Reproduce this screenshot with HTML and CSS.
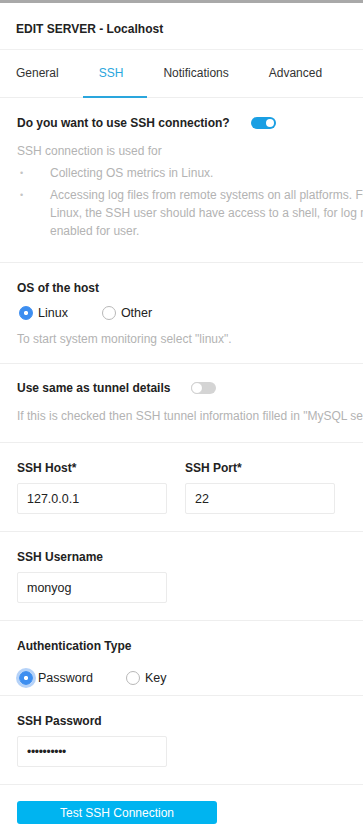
FILE: index.html
```html
<!DOCTYPE html>
<html>
  <head>
    <meta charset="utf-8" />
    <title>Edit Server - Localhost</title>
    <link rel="stylesheet" href="styles.css">
  </head>
  <body>
    <div class="panel">
      <div class="header">EDIT SERVER - Localhost</div>

      <div class="tabs">
        <div class="tab">General</div>
        <div class="tab active">SSH</div>
        <div class="tab">Notifications</div>
        <div class="tab">Advanced</div>
      </div>

      <div class="section intro">
        <div class="title-row">
          <span class="title">Do you want to use SSH connection?</span>
          <span class="toggle on"><span class="knob"></span></span>
        </div>
        <div class="note first">SSH connection is used for</div>
        <ul class="note-list">
          <li>Collecting OS metrics in Linux.</li>
          <li>Accessing log files from remote systems on all platforms. For<br>Linux, the SSH user should have access to a shell, for log monitoring shell must be<br>enabled for user.</li>
        </ul>
      </div>

      <div class="section os">
        <div class="title">OS of the host</div>
        <div class="radio-row">
          <label class="option"><input type="radio" name="os" checked /> Linux</label>
          <label class="option"><input type="radio" name="os" /> Other</label>
        </div>
        <div class="note">To start system monitoring select "linux".</div>
      </div>

      <div class="section tunnel">
        <div class="title-row">
          <span class="title">Use same as tunnel details</span>
          <span class="toggle"><span class="knob"></span></span>
        </div>
        <div class="note first">If this is checked then SSH tunnel information filled in "MySQL server" tab will be used.</div>
      </div>

      <div class="section">
        <div class="field-grid">
          <div class="field">
            <label for="sshHost">SSH Host*</label>
            <input type="text" id="sshHost" value="127.0.0.1" />
          </div>
          <div class="field">
            <label for="sshPort">SSH Port*</label>
            <input type="text" id="sshPort" value="22" />
          </div>
        </div>
      </div>

      <div class="section">
        <div class="field">
          <label for="sshUser">SSH Username</label>
          <input type="text" id="sshUser" value="monyog" />
        </div>
      </div>

      <div class="section auth">
        <div class="title">Authentication Type</div>
        <div class="radio-row">
          <label class="option"><input type="radio" name="auth" class="focus" checked /> Password</label>
          <label class="option"><input type="radio" name="auth" /> Key</label>
        </div>
      </div>

      <div class="section">
        <div class="field">
          <label for="sshPass">SSH Password</label>
          <input type="password" id="sshPass" class="secret" value="monyog1234" />
        </div>
      </div>

      <div class="section last">
        <button type="button" class="test-btn">Test SSH Connection</button>
      </div>
    </div>
  </body>
</html>
```

FILE: styles.css
```css
body {
  margin: 0;
  font-family: "Liberation Sans", Arial, sans-serif;
  font-size: 12px;
  color: #222;
  background: #fff;
  overflow: hidden;
}

.panel {
  width: 620px;
  border-top: 3px solid #a9a9a9;
}

.header {
  height: 47px;
  box-sizing: border-box;
  padding: 18px 16px 0;
  font-weight: bold;
  line-height: 16px;
  border-bottom: 1px solid #f0f0f0;
}

.tabs {
  display: flex;
  height: 48px;
  box-sizing: border-box;
  border-bottom: 1px solid #eee;
}

.tab {
  padding: 1px 24px 0 16px;
  line-height: 45px;
  margin-bottom: -1px;
  border-bottom: 2px solid transparent;
  color: #333;
}

.tab.active {
  color: #2aa6dd;
  border-bottom-color: #2aa6dd;
}

.section {
  padding: 17px 17px 17px;
  border-bottom: 1px solid #eee;
}

.intro {
  padding-bottom: 22px;
}

.title,
.field label {
  display: block;
  font-weight: bold;
  line-height: 16px;
}

.title-row {
  display: flex;
  align-items: center;
  gap: 21px;
}

.toggle {
  display: flex;
  align-items: center;
  justify-content: flex-start;
  width: 25px;
  height: 12px;
  box-sizing: border-box;
  border-radius: 6px;
  background: #d4d4d4;
}

.toggle .knob {
  width: 12px;
  height: 12px;
  box-sizing: border-box;
  border-radius: 50%;
  background: #fff;
  border: 1px solid #d0d0d0;
}

.toggle.on {
  justify-content: flex-end;
  padding: 0 2px;
  background: #1a9fe3;
}

.toggle.on .knob {
  width: 8px;
  height: 8px;
  border: none;
}

.note {
  color: #b3b3b3;
  line-height: 18px;
  margin-top: 9px;
  white-space: nowrap;
}

.note.first {
  margin-top: 11px;
}

.note-list {
  list-style: none;
  margin: 4px 0 0;
  padding: 0;
  color: #b3b3b3;
  line-height: 18px;
  white-space: nowrap;
}

.note-list li {
  display: flex;
  margin-top: 4px;
}

.note-list li::before {
  content: "\2022";
  flex: 0 0 30px;
  padding-left: 3px;
  font-size: 9px;
  color: #c4c4c4;
}

.os {
  padding-bottom: 15px;
}

.tunnel {
  padding-top: 16px;
}

.radio-row {
  display: flex;
  gap: 32px;
  margin-top: 9px;
  line-height: 16px;
}

.auth .radio-row {
  margin-top: 16px;
  gap: 31px;
}

.auth {
  padding-bottom: 9px;
}

.option {
  display: flex;
  align-items: center;
  gap: 5px;
  color: #222;
  font-size: 12.5px;
}

input[type="radio"] {
  appearance: none;
  width: 14px;
  height: 14px;
  margin: 0 0 0 2px;
  border-radius: 50%;
  border: 1px solid #b8b8b8;
  background: #fff;
}

input[type="radio"]:checked {
  border-color: #3d8ef0;
  background: radial-gradient(circle, #fff 0, #fff 1.8px, #3d8ef0 2.4px);
}

input[type="radio"].focus {
  box-shadow: 0 0 0 3px rgba(90, 155, 240, 0.45);
}

.field-grid {
  display: grid;
  grid-template-columns: 150px 150px;
  gap: 18px;
}

.field input {
  display: block;
  width: 150px;
  height: 31px;
  box-sizing: border-box;
  margin-top: 7px;
  padding: 0 9px;
  border: 1px solid #ebebeb;
  border-radius: 2px;
  font-family: "Liberation Sans", Arial, sans-serif;
  font-size: 12.5px;
  color: #222;
}

.field input.secret {
  font-size: 12px;
  letter-spacing: -0.3px;
}

.last {
  padding-top: 16px;
  border-bottom: none;
}

.test-btn {
  width: 200px;
  height: 23px;
  border: none;
  border-radius: 3px;
  background: #00b4f0;
  color: #fff;
  font-family: "Liberation Sans", Arial, sans-serif;
  font-size: 12px;
  cursor: pointer;
}
```
